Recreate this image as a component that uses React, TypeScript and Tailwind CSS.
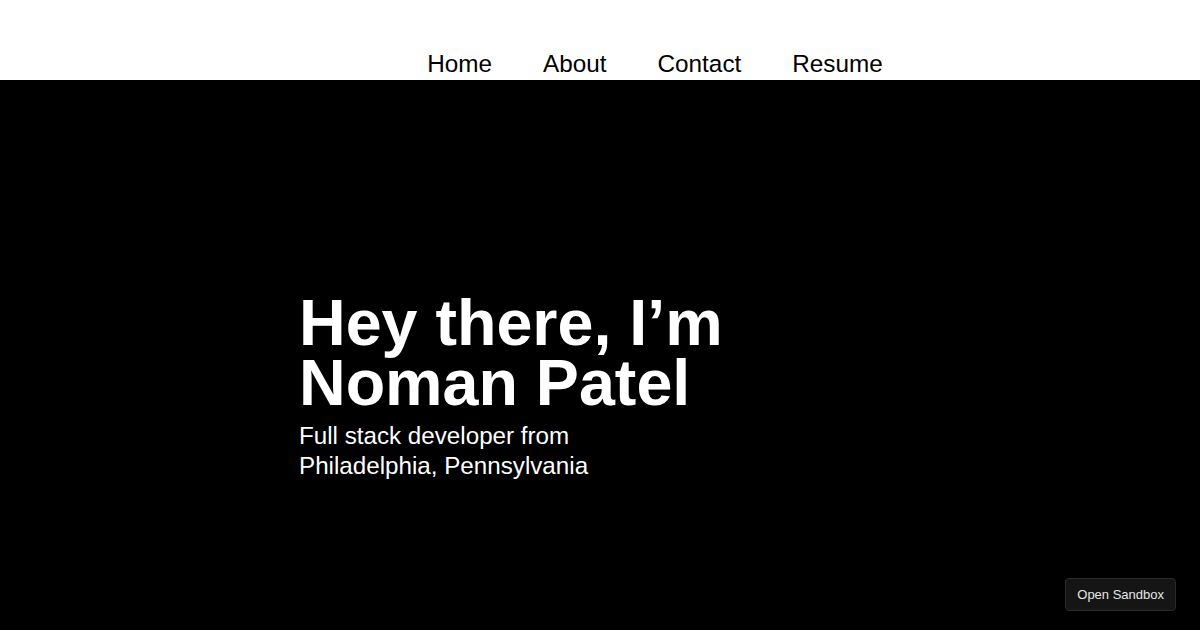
export default function App() {
  const links = ['Home', 'About', 'Contact', 'Resume'];

  return (
    <div className="min-h-screen flex flex-col bg-black font-['Liberation_Sans',Arial,sans-serif]">
      {/* Header */}
      <header className="h-20 bg-white">
        <nav className="flex justify-center gap-[51px] pt-[50px] pl-[110px]">
          {links.map((l) => (
            <a key={l} href="#" className="text-[24.3px] leading-[28px] text-black">
              {l}
            </a>
          ))}
        </nav>
      </header>

      {/* Hero */}
      <main className="flex-1 bg-black pt-[213px] pl-[299px]">
        <h1 className="text-[64.6px] leading-[60px] font-bold text-white">
          Hey there, I’m
          <br />
          Noman Patel
        </h1>
        <p className="mt-2 text-[24.2px] leading-[30px] text-white">
          Full stack developer from
          <br />
          Philadelphia, Pennsylvania
        </p>
      </main>

      <button className="fixed right-[24px] bottom-[19px] h-[33px] px-[11px] rounded-[4px] bg-[#151515] border border-[#2b2b2b] text-[13px] text-[#e5e5e5]">
        Open Sandbox
      </button>
    </div>
  );
}
